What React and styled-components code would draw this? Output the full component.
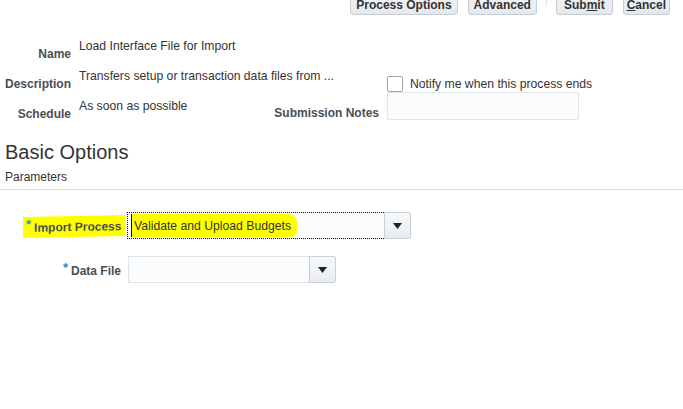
import React from 'react'
import styled, { createGlobalStyle } from 'styled-components'

const Global = createGlobalStyle`
  body {
    margin: 0;
    background: #fff;
    font-family: "Liberation Sans", Arial, sans-serif;
    color: #333;
  }
`

const Page = styled.div`
  width: 683px;
  height: 409px;
  overflow: hidden;
  position: relative;
`

const Toolbar = styled.div`
  display: flex;
  justify-content: flex-end;
  align-items: flex-start;
  gap: 10px;
  padding-right: 13px;
  margin-top: -11px;
  height: 26px;
`

const Button = styled.button`
  height: 26px;
  padding: 6px ${p => p.pad || 5}px 0;
  border: 1px solid #c4ced7;
  border-radius: 3px;
  background: linear-gradient(#f6f8fa, #e4e8ec);
  font-family: "Liberation Sans", Arial, sans-serif;
  font-weight: bold;
  font-size: 12px;
  color: #333;
  display: flex;
  align-items: center;
  u { text-decoration: underline; }
`

const Separator = styled.div`
  width: 1px;
  height: 17px;
  background: #dde3e8;
  margin: 0 -1px;
`

const Header = styled.div`
  display: grid;
  grid-template-columns: 71px 300px 240px;
  grid-template-rows: 30px 30px 28px;
  column-gap: 8px;
  margin-top: 23px;
`

const Label = styled.div`
  font-size: 12px;
  font-weight: bold;
  color: #4a4e55;
  text-align: right;
  padding-top: ${p => p.top || 9}px;
  white-space: nowrap;
`

const Value = styled.div`
  font-size: 12.2px;
  color: #333;
  padding-top: 1px;
  white-space: nowrap;
`

const ScheduleValue = styled(Value)`
  display: flex;
  justify-content: space-between;
`

const CheckRow = styled.div`
  display: flex;
  align-items: center;
  gap: 7px;
  padding-top: 1px;
  font-size: 12.2px;
  color: #333;
  white-space: nowrap;
`

const Box = styled.span`
  width: 14px;
  height: 14px;
  border: 1px solid #9ea6ad;
  border-radius: 2px;
  background: #fff;
`

const NotesLabel = styled.span`
  font-size: 12px;
  font-weight: bold;
  color: #4a4e55;
  padding-top: 7px;
`

const TextInput = styled.div`
  width: 190px;
  height: 26px;
  margin-top: -6px;
  border: 1px solid #dfe4e8;
  border-radius: 2px;
  background: #fbfcfd;
`

const Title = styled.h2`
  margin: 15px 0 0 5px;
  font-size: 20px;
  font-weight: normal;
  color: #333;
`

const Sub = styled.div`
  margin: 6px 0 0 5px;
  font-size: 12px;
  color: #333;
`

const Divider = styled.hr`
  margin: 5px 0 0 0;
  border: none;
  border-top: 1px solid #d6e0e8;
`

const Params = styled.div`
  display: flex;
  flex-direction: column;
  gap: 17px;
  margin-top: 22px;
`

const ParamRow = styled.div`
  display: flex;
  align-items: center;
`

const ParamLabel = styled.div`
  width: 121px;
  display: flex;
  justify-content: flex-end;
  align-items: center;
  font-size: 12px;
  font-weight: bold;
  color: #4a4e55;
  padding-top: 2px;
`

const Star = styled.span`
  color: #1f8fd6;
  font-size: 13px;
  margin-right: 3px;
  position: relative;
  top: -3px;
`

const Mark = styled.span`
  display: inline-flex;
  align-items: center;
  background: #ffff00;
  padding: 3px 4px 3px 3px;
  margin-right: -4px;
  transform: skewY(-1deg);
`

const Select = styled.div`
  margin-left: ${p => p.ml}px;
  display: flex;
  height: 27px;
`

const Field = styled.div`
  width: ${p => p.w}px;
  height: 100%;
  box-sizing: border-box;
  border: 1px ${p => (p.focus ? 'dotted #111' : 'solid #dfe4e8')};
  border-right: none;
  background: #fbfcfd;
  display: flex;
  align-items: center;
  padding-left: 3px;
  font-size: 12.2px;
  color: #333;
`

const FieldMark = styled.span`
  background: #ffff00;
  padding: 5px 6px 4px 2px;
  border-radius: 0 8px 6px 0;
  border-left: 1px solid #111;
`

const Drop = styled.div`
  width: 27px;
  height: 100%;
  box-sizing: border-box;
  border: 1px solid #c9d1d8;
  border-radius: 0 2px 2px 0;
  background: linear-gradient(#f7f8fa, #e9ecef);
  display: flex;
  align-items: center;
  justify-content: center;
`

const Arrow = () => (
  <svg width="9" height="6" viewBox="0 0 9 6">
    <path d="M0 0 H9 L4.5 6 Z" fill="#222" />
  </svg>
)

export default function App() {
  return (
    <Page>
      <Global />
      <Toolbar>
        <Button>Process Options</Button>
        <Button pad={5}>Advanced</Button>
        <Separator />
        <Button pad={7}>Sub<u>m</u>it</Button>
        <Button pad={3}><u>C</u>ancel</Button>
      </Toolbar>

      <Header>
        <Label>Name</Label>
        <Value>Load Interface File for Import</Value>
        <div />
        <Label>Description</Label>
        <Value>Transfers setup or transaction data files from ...</Value>
        <CheckRow><Box />Notify me when this process ends</CheckRow>
        <Label>Schedule</Label>
        <ScheduleValue>
          <span>As soon as possible</span>
          <NotesLabel>Submission Notes</NotesLabel>
        </ScheduleValue>
        <TextInput />
      </Header>

      <Title>Basic Options</Title>
      <Sub>Parameters</Sub>
      <Divider />

      <Params>
        <ParamRow>
          <ParamLabel>
            <Mark><Star>*</Star>Import Process</Mark>
          </ParamLabel>
          <Select ml={6}>
            <Field w={257} focus>
              <FieldMark>Validate and Upload Budgets</FieldMark>
            </Field>
            <Drop><Arrow /></Drop>
          </Select>
        </ParamRow>
        <ParamRow>
          <ParamLabel>
            <Star>*</Star>Data File
          </ParamLabel>
          <Select ml={7}>
            <Field w={181} />
            <Drop><Arrow /></Drop>
          </Select>
        </ParamRow>
      </Params>
    </Page>
  )
}
